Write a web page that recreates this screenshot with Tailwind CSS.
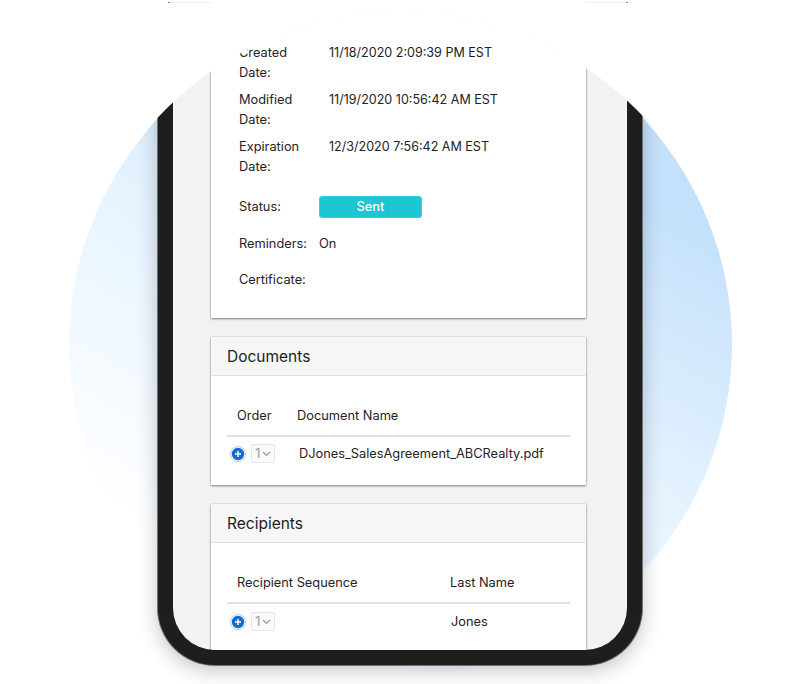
<!DOCTYPE html>
<html lang="en">
<head>
    <meta charset="UTF-8">
    <title>Agreement Details</title>
    <script src="https://cdn.jsdelivr.net/npm/@tailwindcss/browser@4"></script>
</head>
<body class="bg-white">
<div class="relative w-[800px] h-[684px] overflow-hidden bg-white font-['Inter',sans-serif] text-[12.8px] text-[#1f2225]">

    <!-- Blue circle behind the phone -->
    <div class="absolute left-[69px] top-[13px] w-[663px] h-[663px] rounded-full bg-linear-[30deg] from-white from-[18%] via-[#e5f3fe] via-[50%] to-[#c4e1fb] to-[78%]"></div>

    <!-- Tiny marks at the very top -->
    <div class="absolute left-[168px] top-[2px] w-[43px] h-px bg-[#eeeeee]"></div>
    <div class="absolute left-[586px] top-[2px] w-[42px] h-px bg-[#eeeeee]"></div>
    <div class="absolute left-[168px] top-[2px] w-[2px] h-px bg-[#888]"></div>
    <div class="absolute left-[626px] top-[2px] w-[2px] h-px bg-[#888]"></div>

    <!-- Phone, cut off by the circle's top arc -->
    <div class="absolute inset-0 [clip-path:path('M68_345A333_333_0_0_1_734_345L800_345L800_684L0_684L0_345Z')]">
        <div class="absolute left-[158px] top-[-40px] w-[484px] h-[705px] rounded-b-[57px] border-x-[15px] border-b-[15px] border-[#1e1e1c] bg-[#f2f2f4] shadow-[0_0_0_1px_rgba(90,95,100,0.85),0_5px_20px_rgba(40,50,60,0.3),inset_0_0_0_1px_rgba(255,255,255,0.45)] overflow-hidden">
            <div class="flex flex-col gap-[19px] pl-[38px] w-[413px]">

                <!-- Details card -->
                <section class="h-[358px] bg-white shadow-[0_1px_2px_rgba(0,0,0,0.45),0_0_2px_rgba(0,0,0,0.15)] pt-[83px] pl-[28px]">
                    <div class="grid grid-cols-[90px_1fr] leading-[20px]">
                        <p class="w-[70px]">Created Date:</p><p class="text-[12.55px]">11/18/2020 2:09:39 PM EST</p>
                        <p class="w-[70px] mt-[7px]">Modified Date:</p><p class="mt-[7px] text-[12.55px]">11/19/2020 10:56:42 AM EST</p>
                        <p class="w-[70px] mt-[7px]">Expiration Date:</p><p class="mt-[7px] text-[12.55px]">12/3/2020 7:56:42 AM EST</p>
                    </div>
                    <div class="flex items-center mt-[19px] h-[22px]">
                        <span class="w-[80px]">Status:</span>
                        <span class="w-[103px] h-[22px] rounded-[3px] bg-[#1dc6d1] border border-[#2fd0da] text-white font-medium text-center leading-[19px]">Sent</span>
                    </div>
                    <div class="flex items-center mt-[16px] h-[20px]">
                        <span class="w-[80px]">Reminders:</span><span>On</span>
                    </div>
                    <div class="flex items-center mt-[16px] h-[20px]">
                        <span>Certificate:</span>
                    </div>
                </section>

                <!-- Documents card -->
                <section class="h-[148px] bg-white shadow-[0_1px_2px_rgba(0,0,0,0.45),0_0_2px_rgba(0,0,0,0.15)]">
                    <h2 class="h-[39px] pl-[16px] bg-[#f6f6f6] border-b border-[#e0e0e0] text-[15.5px] leading-[40px] text-[#1c1e21]">Documents</h2>
                    <div class="mx-[16px]">
                        <div class="flex h-[61px] pl-[10px] pt-[31px] leading-[18px] border-b-2 border-[#dde0e4]">
                            <span class="w-[60px]">Order</span><span>Document Name</span>
                        </div>
                        <div class="flex items-center h-[33px] pl-[3px]">
                            <svg class="w-[16px] h-[16px]" viewBox="0 0 16 16"><circle cx="8" cy="8" r="7.5" fill="#fff" stroke="#c4c8cc"/><circle cx="8" cy="8" r="6.2" fill="#0b6fd8"/><path d="M8 5v6M5 8h6" stroke="#fff" stroke-width="1.5"/></svg>
                            <span class="flex items-center gap-[1px] ml-[5px] w-[24px] h-[19px] pl-[3px] rounded-[2px] border border-[#e6e6e6] bg-[#fafafa] text-[13.5px] text-[#a0a0a0]">1<svg class="w-[9px] h-[6px]" viewBox="0 0 9 6"><path d="M1 1l3.5 3.5L8 1" fill="none" stroke="#9a9a9a" stroke-width="1.2"/></svg></span>
                            <span class="ml-[24px]">DJones_SalesAgreement_ABCRealty.pdf</span>
                        </div>
                    </div>
                </section>

                <!-- Recipients card -->
                <section class="h-[200px] bg-white shadow-[0_1px_2px_rgba(0,0,0,0.45),0_0_2px_rgba(0,0,0,0.15)]">
                    <h2 class="h-[39px] pl-[16px] bg-[#f6f6f6] border-b border-[#e0e0e0] text-[15.5px] leading-[40px] text-[#1c1e21]">Recipients</h2>
                    <div class="mx-[16px]">
                        <div class="flex h-[61px] pl-[10px] pt-[31px] leading-[18px] border-b-2 border-[#dde0e4]">
                            <span class="w-[213px]">Recipient Sequence</span><span>Last Name</span>
                        </div>
                        <div class="flex items-center h-[35px] pl-[3px]">
                            <svg class="w-[16px] h-[16px]" viewBox="0 0 16 16"><circle cx="8" cy="8" r="7.5" fill="#fff" stroke="#c4c8cc"/><circle cx="8" cy="8" r="6.2" fill="#0b6fd8"/><path d="M8 5v6M5 8h6" stroke="#fff" stroke-width="1.5"/></svg>
                            <span class="flex items-center gap-[1px] ml-[5px] w-[24px] h-[19px] pl-[3px] rounded-[2px] border border-[#e6e6e6] bg-[#fafafa] text-[13.5px] text-[#a0a0a0]">1<svg class="w-[9px] h-[6px]" viewBox="0 0 9 6"><path d="M1 1l3.5 3.5L8 1" fill="none" stroke="#9a9a9a" stroke-width="1.2"/></svg></span>
                            <span class="ml-[176px]">Jones</span>
                        </div>
                    </div>
                </section>
            </div>
        </div>
    </div>
</div>
</body>
</html>
